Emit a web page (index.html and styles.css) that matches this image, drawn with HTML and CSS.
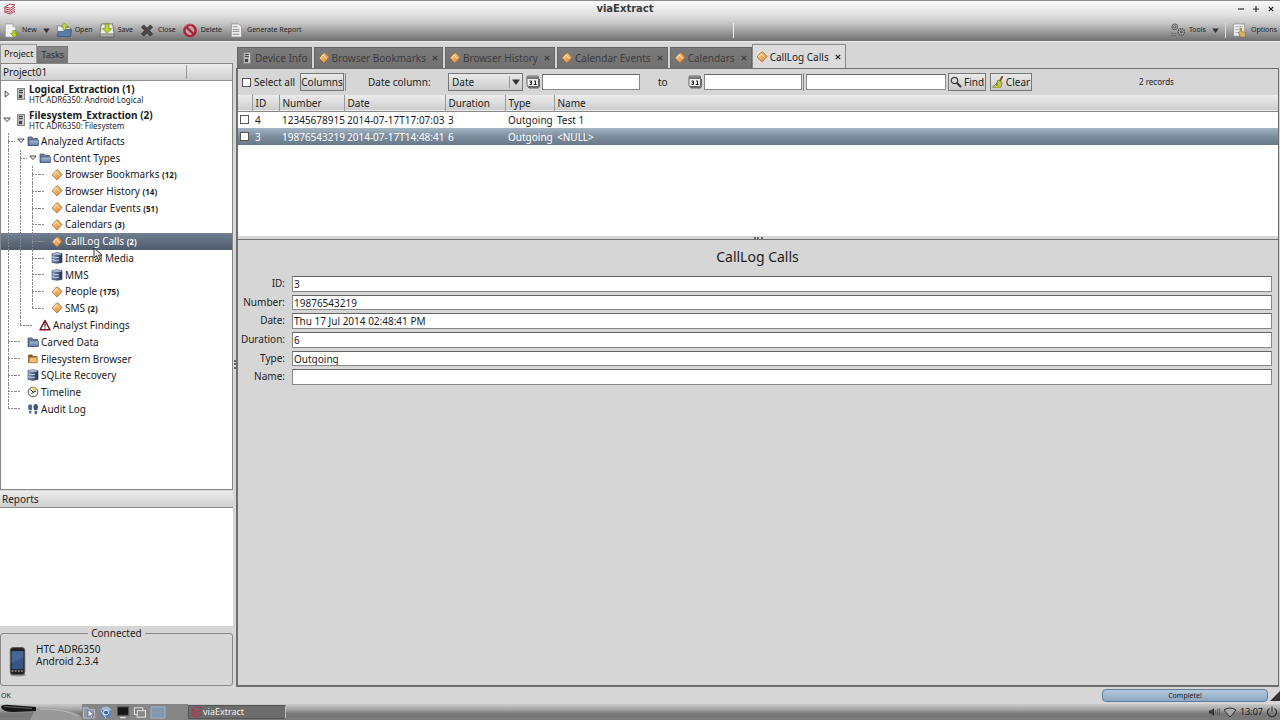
FILE: index.html
```
<!DOCTYPE html>
<html lang="en">
<head>
  <meta charset="UTF-8">
  <title>viaExtract</title>
  <link rel="stylesheet" href="styles.css">
</head>
<body>
  <!-- Shared icons -->
  <svg class="sprite" aria-hidden="true">
    <defs>
      <linearGradient id="gFolder" x1="0" y1="0" x2="0" y2="1"><stop offset="0" stop-color="#a9bdd8"/><stop offset="1" stop-color="#5f7fa9"/></linearGradient>
      <linearGradient id="gTag" x1="0" y1="0" x2="1" y2="1"><stop offset="0" stop-color="#ffd795"/><stop offset="1" stop-color="#dd7f2b"/></linearGradient>
      <linearGradient id="gDb" x1="0" y1="0" x2="1" y2="0"><stop offset="0" stop-color="#8aa0c0"/><stop offset="1" stop-color="#1f3152"/></linearGradient>
    </defs>
    <symbol id="tag" viewBox="0 0 12 12">
      <path d="M5.5 1 L7 1 L11 5.5 L6 11 L1 6 Z" fill="url(#gTag)" stroke="#a8703c" stroke-width=".8"/>
      <path d="M5 3 L2.6 5.8 M5 3 L8.8 6.6" stroke="#fff0cf" stroke-width=".9" fill="none"/>
    </symbol>
    <symbol id="folder" viewBox="0 0 12 12">
      <path d="M1 10.500V2h4l1 1.500h4.500v7z" fill="#6b7f9d" stroke="#46597a" stroke-width=".8"/>
      <path d="M2.200 5h9.300v5.500H1.500z" fill="url(#gFolder)" stroke="#46597a" stroke-width=".7"/>
    </symbol>
    <symbol id="folder-open" viewBox="0 0 12 12">
      <path d="M1.500 9.500V2h3.500l1 1.500h4v6z" fill="#8a5a2a" stroke="#7a4c22" stroke-width=".7"/>
      <path d="M2.500 4.300h7.500v5.500H2z" fill="#f2c173" stroke="#a5713a" stroke-width=".7"/>
    </symbol>
    <symbol id="db" viewBox="0 0 12 12">
      <path d="M1 1.500Q6 0 11 1.500V10.500Q6 12 1 10.500z" fill="url(#gDb)" stroke="#2a3a58" stroke-width=".6"/>
      <ellipse cx="6" cy="2" rx="4.600" ry="1" fill="#a7b6cd"/>
      <path d="M1.200 4.800Q4 6.200 8 5.400M1.200 7.600Q4 9 8 8.200" stroke="#dfe7f2" stroke-width=".8" fill="none"/>
    </symbol>
    <symbol id="warn" viewBox="0 0 12 12">
      <path d="M6 1.500L11 10.800H1z" fill="#fff" stroke="#7d1620" stroke-width="1.500" stroke-linejoin="round"/>
      <path d="M6 4.500v3.200M6 8.600v1" stroke="#222" stroke-width="1.200"/>
    </symbol>
    <symbol id="clock" viewBox="0 0 12 12">
      <circle cx="6" cy="6" r="4.800" fill="#f4f4f4" stroke="#555" stroke-width="1"/>
      <path d="M6 6L9.800 3A4.800 4.800 0 0 0 5 1.400z" fill="#e2d65c"/>
      <path d="M3.500 3.500L6.200 6.200L9 5M6.200 6.200L4.500 8" stroke="#222" stroke-width="1" fill="none"/>
    </symbol>
    <symbol id="feet" viewBox="0 0 12 12">
      <path d="M1 4C1 .300 5.300 .300 5.300 3.800Q5.300 5.500 4.700 7.200H1.800Q1 5.500 1 4zM1.900 8.100h2.700Q4.700 10.800 3.200 10.800T1.900 8.100z" fill="#526a8c"/>
      <path d="M6.500 3.500C6.500 0 11 .300 11 4Q10.900 5.600 10.200 7.300H7.300Q6.500 5.500 6.500 3.500zM7.400 8.200H10.200Q10.200 11.200 8.800 11.200T7.400 8.200z" fill="#3c5376"/>
    </symbol>
    <symbol id="device" viewBox="0 0 8 12">
      <rect x=".5" y=".5" width="7" height="11" fill="#b4b4b4" stroke="#888"/>
      <path d="M2 2.500h4M2 4.500h4" stroke="#444" stroke-width="1"/>
      <path d="M2 7h3v3H2z" fill="#444"/><path d="M6.300 1.500v9" stroke="#eee" stroke-width=".7"/>
    </symbol>
    <symbol id="cal" viewBox="0 0 14 14">
      <path d="M2 11.500L3 13h9.500L13.500 11V4" fill="#777" stroke="#666"/>
      <rect x="1" y="1" width="11.500" height="10.500" rx="1" fill="#f0f0f0" stroke="#666"/>
      <path d="M1 1.500h11.500v2.500H1z" fill="#777"/>
      <path d="M3.500 6h2v3.500h-2M3.800 7.700h1.700M8 6h1.500v3.500M7.700 9.500h3" stroke="#222" fill="none"/>
    </symbol>
    <symbol id="down" viewBox="0 0 8 6"><path d="M0 .5h8L4 6z" fill="#333"/></symbol>
    <symbol id="open" viewBox="0 0 8 8"><path d="M.800 2h6.400L4 5.600z" fill="#f4f4f4" stroke="#333" stroke-width=".9"/></symbol>
    <symbol id="shut" viewBox="0 0 8 8"><path d="M2.200 1v6L5.800 4z" fill="#f4f4f4" stroke="#333" stroke-width=".9"/></symbol>
    <symbol id="x" viewBox="0 0 6 6"><path d="M.8.8l4.400 4.400M5.200.8L.8 5.200" stroke="currentColor" stroke-width="1.200"/></symbol>
    <symbol id="layers" viewBox="0 0 12 12">
      <path d="M.8 4L6 1l5 1L6.500 5.200zM.8 4v1.700l5.500 1.500L11 4.200M.8 6.300v1.500l5.500 1.500L11 6.300M.8 8.400v1l5.500 1.500L11 8.200" fill="none" stroke="#b4324c" stroke-width=".9"/>
    </symbol>
  </svg>

  <header class="top">
    <div class="titlebar">
      <svg class="logo"><use href="#layers"/></svg>
      <h1>viaExtract</h1>
      <div class="window-buttons">
        <button aria-label="Minimize"><svg viewBox="0 0 6 6"><path d="M0 3h6" stroke="#333" stroke-width="1.200"/></svg></button>
        <button aria-label="Maximize"><svg viewBox="0 0 6 6"><path d="M0 3h6M3 0v6" stroke="#333" stroke-width="1.200"/></svg></button>
        <button aria-label="Close window"><svg><use href="#x"/></svg></button>
      </div>
    </div>
    <div class="toolbar">
      <div class="tools">
        <button>
          <svg viewBox="0 0 16 16"><path d="M2 1h8l3 3v11H2z" fill="#f3f3f3" stroke="#999" stroke-width=".7"/><path d="M10 1v3h3" fill="#ccc" stroke="#999" stroke-width=".6"/><path d="M10 8h3v3h2.500l-4 4.500L7.500 11H10z" fill="#b9d42d" stroke="#71851c" stroke-width=".7"/></svg>
          New <svg class="arrow"><use href="#down"/></svg>
        </button>
        <button>
          <svg viewBox="0 0 16 16"><path d="M1 14V3h5l1 2h8v9z" fill="#eef1f4" stroke="#66788c" stroke-width=".8"/><path d="M1 14.500L2 9h5l2-2h7l-1 7.500z" fill="#597da5" stroke="#38526f" stroke-width=".8"/><path d="M7 7V4H4.500L8.500 0l4 4H10v3z" fill="#bddb3b" stroke="#6f861c" stroke-width=".6"/></svg>
          Open
        </button>
        <button>
          <svg viewBox="0 0 16 16"><path d="M2 1h12l1.500 10v4H.5v-4z" fill="#ececec" stroke="#666" stroke-width=".9"/><path d="M.8 11.500h14.400v3H.8z" fill="#aaa" stroke="#666" stroke-width=".6"/><path d="M6 1h4v5h3l-5 5-5-5h3z" fill="#bbd62d" stroke="#71851c" stroke-width=".7"/></svg>
          Save
        </button>
        <button>
          <svg viewBox="0 0 16 16"><path d="M4.500 2L8 5.500 11.500 2 14 4.500 10.500 8l3.500 3.500-2.500 2.500L8 10.500 4.500 14 2 11.500 5.500 8 2 4.500z" fill="#494949" stroke="#333" stroke-width=".7"/></svg>
          Close
        </button>
        <button>
          <svg viewBox="0 0 16 16"><circle cx="8" cy="8" r="6" fill="#c5a5a9" stroke="#a92237" stroke-width="2.600"/><path d="M4 4l8 8" stroke="#a92237" stroke-width="2.600"/><path d="M2.500 5A6.500 6.500 0 0 1 10 1.500" stroke="#e57885" stroke-width=".8" fill="none"/></svg>
          Delete
        </button>
        <button>
          <svg viewBox="0 0 16 16"><path d="M3 1h8l3 3v11H3z" fill="#eee" stroke="#888" stroke-width=".8"/><path d="M4.500 4h5M4.500 7h7M4.500 9h7M4.500 12h7" stroke="#888"/></svg>
          Generate Report
        </button>
      </div>
      <div class="tools right">
        <button>
          <svg viewBox="0 0 16 16" fill="none" stroke="#555"><circle cx="4.500" cy="4" r="3"/><circle cx="4.500" cy="4" r="1.200"/><circle cx="11.500" cy="9.500" r="3.300" fill="#ccc" stroke-width="1.800" stroke-dasharray="1.600 .6"/><circle cx="11.500" cy="9.500" r="1.300" fill="#777"/><path d="M1 11h5M1 13.500h5" stroke-dasharray="1 1"/></svg>
          Tools <svg class="arrow"><use href="#down"/></svg>
        </button>
        <button>
          <svg viewBox="0 0 16 16"><path d="M1 1h12v13H1z" fill="#eee" stroke="#888" stroke-width=".8"/><path d="M3 4h8M3 7h4M3 10h3" stroke="#aaa"/><path d="M8 14l-2-4 2-.5V5.500h1.500V9L14 10v5H8z" fill="#d7ae62" stroke="#88683a" stroke-width=".7"/></svg>
          Options
        </button>
      </div>
    </div>
  </header>

  <main class="main">
    <aside class="side">
      <div class="side-tabs">
        <button class="side-tab current">Project</button>
        <button class="side-tab">Tasks</button>
      </div>
      <section class="project">
        <div class="bar"><span class="project-name">Project01</span></div>
        <ul class="roots">
          <li>
            <svg class="exp"><use href="#shut"/></svg><svg class="dev"><use href="#device"/></svg>
            <div><b>Logical_Extraction (1)</b><small>HTC ADR6350: Android Logical</small></div>
          </li>
          <li>
            <svg class="exp"><use href="#open"/></svg><svg class="dev"><use href="#device"/></svg>
            <div><b>Filesystem_Extraction (2)</b><small>HTC ADR6350: Filesystem</small></div>
          </li>
        </ul>
        <ul class="tree">
          <li><i class="t"></i><svg class="exp"><use href="#open"/></svg><svg><use href="#folder"/></svg><span>Analyzed Artifacts</span></li>
          <li><i class="v"></i><i class="t"></i><svg class="exp"><use href="#open"/></svg><svg><use href="#folder"/></svg><span>Content Types</span></li>
          <li><i class="v"></i><i class="v"></i><i class="t"></i><i class="s"></i><svg><use href="#tag"/></svg><span>Browser Bookmarks <b>(12)</b></span></li>
          <li><i class="v"></i><i class="v"></i><i class="t"></i><i class="s"></i><svg><use href="#tag"/></svg><span>Browser History <b>(14)</b></span></li>
          <li><i class="v"></i><i class="v"></i><i class="t"></i><i class="s"></i><svg><use href="#tag"/></svg><span>Calendar Events <b>(51)</b></span></li>
          <li><i class="v"></i><i class="v"></i><i class="t"></i><i class="s"></i><svg><use href="#tag"/></svg><span>Calendars <b>(3)</b></span></li>
          <li class="selected"><i class="v"></i><i class="v"></i><i class="t"></i><i class="s"></i><svg><use href="#tag"/></svg><span>CallLog Calls <b>(2)</b></span></li>
          <li><i class="v"></i><i class="v"></i><i class="t"></i><i class="s"></i><svg><use href="#db"/></svg><span>Internal Media</span></li>
          <li><i class="v"></i><i class="v"></i><i class="t"></i><i class="s"></i><svg><use href="#db"/></svg><span>MMS</span></li>
          <li><i class="v"></i><i class="v"></i><i class="t"></i><i class="s"></i><svg><use href="#tag"/></svg><span>People <b>(175)</b></span></li>
          <li><i class="v"></i><i class="v"></i><i class="l"></i><i class="s"></i><svg><use href="#tag"/></svg><span>SMS <b>(2)</b></span></li>
          <li><i class="v"></i><i class="l"></i><i class="s"></i><svg><use href="#warn"/></svg><span>Analyst Findings</span></li>
          <li><i class="t"></i><i class="s"></i><svg><use href="#folder"/></svg><span>Carved Data</span></li>
          <li><i class="t"></i><i class="s"></i><svg><use href="#folder-open"/></svg><span>Filesystem Browser</span></li>
          <li><i class="t"></i><i class="s"></i><svg><use href="#db"/></svg><span>SQLite Recovery</span></li>
          <li><i class="t"></i><i class="s"></i><svg><use href="#clock"/></svg><span>Timeline</span></li>
          <li><i class="l"></i><i class="s"></i><svg><use href="#feet"/></svg><span>Audit Log</span></li>
        </ul>
      </section>
      <section class="reports">
        <div class="bar">Reports</div>
      </section>
      <fieldset class="connected">
        <legend>Connected</legend>
        <svg class="phone" viewBox="0 0 20 34">
          <ellipse cx="10" cy="31.500" rx="9" ry="1.500" fill="#999"/>
          <rect x="1.500" y="1" width="16" height="30" rx="3" fill="#222" stroke="#555"/>
          <rect x="3" y="5" width="13" height="20" fill="#365487"/><path d="M3 5h13v7L3 18z" fill="#46669a"/>
          <path d="M3 27h13" stroke="#999" stroke-width="1.500" stroke-dasharray="2 1.500"/>
        </svg>
        <div class="phone-info">
          <span>HTC ADR6350</span>
          <span>Android 2.3.4</span>
        </div>
      </fieldset>
    </aside>

    <div class="divider"><span class="grip"></span></div>

    <section class="content">
      <nav class="tabs">
        <button class="tab"><svg class="dev"><use href="#device"/></svg>Device Info</button>
        <button class="tab"><svg><use href="#tag"/></svg>Browser Bookmarks<svg class="close"><use href="#x"/></svg></button>
        <button class="tab"><svg><use href="#tag"/></svg>Browser History<svg class="close"><use href="#x"/></svg></button>
        <button class="tab"><svg><use href="#tag"/></svg>Calendar Events<svg class="close"><use href="#x"/></svg></button>
        <button class="tab"><svg><use href="#tag"/></svg>Calendars<svg class="close"><use href="#x"/></svg></button>
        <button class="tab current"><svg><use href="#tag"/></svg>CallLog Calls<svg class="close"><use href="#x"/></svg></button>
      </nav>

      <div class="page">
        <div class="filters">
          <label class="select-all"><input type="checkbox">Select all</label>
          <button class="btn">Columns</button>
          <span class="sep"></span>
          <label class="date-label" for="dateColumn">Date column:</label>
          <div class="combo">
            <select id="dateColumn"><option>Date</option></select>
            <span class="combo-arrow"><svg><use href="#down"/></svg></span>
          </div>
          <button class="cal" aria-label="Pick start date"><svg><use href="#cal"/></svg></button>
          <input class="date" id="from" type="text" aria-label="From">
          <label class="to" for="until">to</label>
          <button class="cal" aria-label="Pick end date"><svg><use href="#cal"/></svg></button>
          <input class="date" id="until" type="text">
          <span class="sep"></span>
          <input class="search" type="text" aria-label="Search">
          <button class="btn find"><svg viewBox="0 0 12 12"><circle cx="4.500" cy="4.500" r="3.200" fill="#ddd" stroke="#444" stroke-width="1.300"/><path d="M7 7l4 4" stroke="#333" stroke-width="2"/></svg>Find</button>
          <button class="btn clear"><svg viewBox="0 0 12 12"><path d="M10.500 0L8 5" stroke="#7d4d28" stroke-width="1.800"/><path d="M6 4l4 2.500c0 3-1 5-2.500 5.500H1.500c-1-1-.500-2 1-2.500Q5 8 6 4z" fill="#c3cb45" stroke="#6d7022" stroke-width=".8"/><path d="M5 7v3" stroke="#555"/></svg>Clear</button>
          <span class="count">2 records</span>
        </div>

        <div class="records">
          <table>
            <colgroup><col class="c-check"><col class="c-id"><col class="c-number"><col class="c-date"><col class="c-duration"><col class="c-type"><col></colgroup>
            <thead>
              <tr><th></th><th>ID</th><th>Number</th><th>Date</th><th>Duration</th><th>Type</th><th>Name</th></tr>
            </thead>
            <tbody>
              <tr><td><input type="checkbox" aria-label="Record 4"></td><td>4</td><td>12345678915</td><td>2014-07-17T17:07:03</td><td>3</td><td>Outgoing</td><td>Test 1</td></tr>
              <tr class="selected"><td><input type="checkbox" aria-label="Record 3"></td><td>3</td><td>19876543219</td><td>2014-07-17T14:48:41</td><td>6</td><td>Outgoing</td><td>&lt;NULL&gt;</td></tr>
            </tbody>
          </table>
        </div>

        <div class="splitter"><span class="grip"></span></div>

        <div class="details">
          <h2>CallLog Calls</h2>
          <form class="form">
            <label for="fId">ID:</label><input id="fId" type="text" value="3">
            <label for="fNumber">Number:</label><input id="fNumber" type="text" value="19876543219">
            <label for="fDate">Date:</label><input id="fDate" type="text" value="Thu 17 Jul 2014 02:48:41 PM">
            <label for="fDuration">Duration:</label><input id="fDuration" type="text" value="6">
            <label for="fType">Type:</label><input id="fType" type="text" value="Outgoing">
            <label for="fName">Name:</label><input id="fName" type="text" value="">
          </form>
        </div>
      </div>
    </section>
  </main>

  <div class="status">
    <span>OK</span>
    <div class="progress">Complete!</div>
    <svg class="resize" viewBox="0 0 10 10"><path d="M10 0v10H0z" fill="#333"/></svg>
  </div>

  <footer class="taskbar">
    <svg class="pen" viewBox="0 0 82 16">
      <path d="M36 4Q62 2 80 11L82 16H30z" fill="#999"/><path d="M40 5Q62 4 78 12" stroke="#bbb" fill="none"/>
      <path d="M1 3Q2 0 10 1L36 3v4L14 8Q2 8 1 3z" fill="#151515"/><path d="M4 2.500l28 2" stroke="#777" stroke-width=".8"/>
    </svg>
    <div class="launchers">
      <svg viewBox="0 0 14 14"><path d="M1 2h5l1 2h6v9H1z" fill="#8b9ab0" stroke="#ccd" stroke-width=".8"/><path d="M6 4v8l2-2 1.500 3 1.500-1-1.500-2.500h3z" fill="#f4f4f4" stroke="#444" stroke-width=".6"/></svg>
      <svg viewBox="0 0 14 14"><circle cx="7" cy="7" r="6" fill="#5b82b7"/><path d="M1.500 4A6 6 0 0 1 12.800 5H7z" fill="#9fb8d8"/><path d="M1.500 5l4 6 1.500 2" stroke="#d5e1f0" fill="none"/><circle cx="7" cy="7" r="2.700" fill="#3868a8" stroke="#fff"/></svg>
      <svg viewBox="0 0 14 14"><rect x="1" y="1" width="12" height="9" fill="#161616" stroke="#555"/><path d="M4 12.500h6" stroke="#ddd" stroke-width="1.500"/></svg>
      <svg viewBox="0 0 14 14"><rect x="1" y="2" width="9" height="7" fill="#777" stroke="#eee"/><rect x="4" y="5" width="9" height="7" fill="#888" stroke="#eee"/></svg>
      <svg class="wide" viewBox="0 0 17 14"><rect x=".5" y="1" width="15" height="12" fill="#8097b0" stroke="#a8b6c6"/><path d="M8 2v10M1 7h14" stroke="#8a9fb6" stroke-width=".7"/></svg>
    </div>
    <button class="task"><svg><use href="#layers"/></svg>viaExtract</button>
    <div class="tray">
      <svg viewBox="0 0 12 12"><path d="M1 4.500h2L6 2v8L3 7.500H1z" fill="#333"/><path d="M7.500 4v4M9.200 3q1.500 3 0 6M11 2q1.500 4 0 8" stroke="#555" fill="none" stroke-width=".8"/></svg>
      <svg class="wifi" viewBox="0 0 14 12"><path d="M1 4q6-4 12 0L7 11z" fill="#aaa" stroke="#333"/></svg>
      <time>13:07</time>
      <svg viewBox="0 0 12 12"><path d="M3.500 2.500a4.500 4.500 0 1 0 5 0M6 .5v5" fill="none" stroke="#333" stroke-width="1.200"/></svg>
    </div>
  </footer>

  <svg class="cursor" viewBox="0 0 10 14"><path d="M1 1v10l2.500-2.300L5.300 13l2-1-1.800-3.800H9z" fill="#eee" stroke="#222" stroke-width=".9"/></svg>
</body>
</html>
```
FILE: styles.css
```
* {
  box-sizing: border-box;
}

body {
  margin: 0;
  height: 100vh;
  display: flex;
  flex-direction: column;
  overflow: hidden;
  background: #d6d6d6;
  color: #1c1c1c;
  font: 10px/14px "Noto Sans", "Open Sans", sans-serif;
}

button, input, select {
  font: inherit;
  color: inherit;
  margin: 0;
}

button {
  display: flex;
  align-items: center;
  padding: 0;
  border: none;
  background: none;
  white-space: nowrap;
}

svg {
  flex: none;
  width: 12px;
  height: 12px;
}

ul {
  list-style: none;
  margin: 0;
  padding: 0;
}

.sprite {
  position: absolute;
  width: 0;
  height: 0;
}

/* Title bar and main toolbar share one gradient */
.top {
  height: 42px;
  flex: none;
  border-top: 1px solid #8c8c8c;
  border-bottom: 1px solid #ececec;
  background: linear-gradient(#fafafa, #e0e0e0 35%, #c2c2c2 58%, #8b8b8b 85%, #707070);
}

.titlebar {
  display: grid;
  grid-template-columns: 1fr auto 1fr;
  align-items: center;
  height: 16px;
  padding: 0 6px 0 4px;
}

.titlebar h1 {
  margin: 0 0 0 -28px;
  font: bold 10px/14px "DejaVu Sans", sans-serif;
  color: #3c3c3c;
}

.window-buttons {
  display: flex;
  justify-content: flex-end;
  gap: 9px;
}

.window-buttons svg {
  width: 6px;
  height: 6px;
}

.toolbar, .tools {
  display: flex;
  align-items: center;
}

.toolbar {
  height: 24px;
  padding: 2px 3px 0;
  font-size: 7px;
}

.tools {
  flex: 1;
  gap: 6px;
}

.tools button {
  gap: 3px;
  color: #222;
}

.tools svg {
  width: 16px;
  height: 15px;
}

.tools .arrow {
  width: 7px;
  height: 5px;
  margin: 0 0 0 3px;
}

.tools.right {
  justify-content: flex-end;
  flex: 0 0 544px;
  border-left: 1px solid #eee;
}

.tools.right button + button {
  border-left: 1px solid #ddd;
  padding-left: 6px;
}

/* Left panel */
.main {
  flex: 1;
  min-height: 0;
  display: flex;
}

.side {
  width: 233px;
  flex: none;
  display: flex;
  flex-direction: column;
}

.side-tabs {
  display: flex;
  align-items: flex-end;
  height: 21px;
  flex: none;
}

.side-tab {
  height: 17px;
  padding: 0 3px;
  border: 1px solid #777;
  border-bottom: none;
  background: linear-gradient(#898989, #747474);
  color: #333;
  font-size: 9px;
}

.side-tab.current {
  height: 19px;
  border-color: #999;
  background: #dcdcdc;
  color: #222;
}

.project {
  flex: 1;
  border: 1px solid #888;
  background: #fff;
}

.bar {
  display: flex;
  height: 17px;
  padding: 1px 2px;
  border-bottom: 1px solid #8f8f8f;
  background: linear-gradient(#ececec, #cfcfcf);
}

.project-name {
  width: 184px;
  border-right: 1px solid #999;
}

.roots li {
  display: flex;
  align-items: center;
  height: 26px;
  padding: 0 2px;
}

.roots div {
  padding-left: 4px;
}

.roots b, .roots small {
  display: block;
}

.roots b {
  line-height: 12px;
}

.roots small {
  font-size: 8px;
  line-height: 10px;
}

.exp {
  width: 8px;
  height: 8px;
  margin: 0 2px;
}

.roots .exp {
  margin: 0 6px 0 0;
}

.dev {
  width: 8px;
}

/* Tree rows share the height evenly */
.tree {
  display: grid;
  grid-auto-rows: 1fr;
  height: 284px;
}

.tree li {
  display: flex;
  align-items: center;
  padding-left: 2px;
}

.tree span {
  padding-left: 2px;
  white-space: nowrap;
}

.tree b {
  font-size: 8px;
}

.tree i {
  flex: none;
  align-self: stretch;
  width: 12px;
  background-repeat: no-repeat;
}

.tree .v, .tree .t, .tree .l {
  background-image: repeating-linear-gradient(#888 0 2px, transparent 2px 3px), repeating-linear-gradient(90deg, #888 0 2px, transparent 2px 3px);
  background-position: 5px 0, 5px 50%;
  background-size: 1px 100%, 0 0;
}

.tree .t {
  background-size: 1px 100%, 7px 1px;
}

.tree .l {
  background-size: 1px 50%, 7px 1px;
}

.tree .s {
  background-image: repeating-linear-gradient(90deg, #888 0 2px, transparent 2px 3px);
  background-position: 0 50%;
  background-size: 6px 1px;
}

.tree .selected {
  background: linear-gradient(#718092, #4d5b6b);
  color: #fff;
}

.reports {
  height: 135px;
  flex: none;
  margin-top: 1px;
  background: #fff;
}

.connected {
  display: flex;
  flex: none;
  height: 60px;
  margin: 0 0 1px;
  padding: 3px 8px;
  border: 1px solid #888;
  border-radius: 3px;
}

.connected legend {
  margin: 0 auto;
  padding: 0 3px;
}

.phone-info {
  display: flex;
  flex-direction: column;
  margin-left: 9px;
  line-height: 12px;
}

.phone {
  width: 18px;
  height: 34px;
  margin-top: 2px;
}

.divider {
  width: 3px;
  flex: none;
  display: flex;
  align-items: center;
  justify-content: center;
}

.grip {
  width: 9px;
  border-top: 2px dotted #666;
}

.divider .grip {
  width: 0;
  height: 9px;
  border-top: none;
  border-left: 2px dotted #666;
}

/* Notebook tabs */
.content {
  flex: 1;
  min-width: 0;
  display: flex;
  flex-direction: column;
}

.tabs {
  display: flex;
  align-items: flex-end;
  gap: 2px;
  height: 26px;
  flex: none;
  padding-left: 1px;
}

.tab {
  height: 21px;
  gap: 2px;
  padding: 0 3px;
  border: 1px solid #666;
  border-bottom: none;
  background: linear-gradient(#7b7b7b, #707070);
  color: #3c3c3c;
}

.tab .dev {
  margin: 0 2px;
}

.tab.current {
  height: 24px;
  margin-left: -2px;
  border-color: #888;
  background: #dcdcdc;
  color: #222;
}

.tab .close {
  width: 6px;
  height: 6px;
  margin: 0 1px 0 4px;
}

.page {
  flex: 1;
  min-height: 0;
  display: flex;
  flex-direction: column;
  margin-right: 1px;
  border: 1px solid #6e6e6e;
  border-left-width: 2px;
  border-bottom-width: 2px;
}

.filters {
  display: flex;
  align-items: center;
  height: 26px;
  flex: none;
  padding-left: 4px;
}

input[type="checkbox"] {
  appearance: none;
  display: block;
  width: 9px;
  height: 9px;
  border: 1px solid #555;
  background: #fff;
}

input[type="text"] {
  min-width: 0;
  border: 1px solid #888;
  border-top-color: #666;
  background: #fff;
  outline: none;
}

.select-all {
  display: flex;
  align-items: center;
  gap: 3px;
  width: 58px;
  white-space: nowrap;
}

.btn {
  justify-content: center;
  width: 44px;
  height: 18px;
  gap: 2px;
  border: 1px solid #777;
  background: linear-gradient(#e9e9e9, #cbcbcb);
}

.btn.find {
  width: 38px;
  margin: 0 4px 0 2px;
}

.btn.clear {
  width: 42px;
}

.sep {
  width: 1px;
  height: 18px;
  margin: 0 2px 0 1px;
  background: #888;
}

.date-label {
  width: 100px;
  padding-left: 20px;
  white-space: nowrap;
}

.combo {
  position: relative;
  width: 75px;
  height: 18px;
}

.combo select {
  appearance: none;
  width: 100%;
  height: 100%;
  padding: 0 3px;
  border: 1px solid #777;
  border-radius: 0;
  background: linear-gradient(#e9e9e9, #cbcbcb);
}

.combo-arrow {
  position: absolute;
  right: 3px;
  top: 3px;
  display: flex;
  align-items: center;
  height: 12px;
  padding-left: 2px;
  border-left: 1px solid #999;
  pointer-events: none;
}

.combo-arrow svg {
  width: 8px;
  height: 6px;
}

.cal {
  margin: 0 2px 0 3px;
}

.cal svg {
  width: 14px;
  height: 14px;
}

.date {
  width: 98px;
  height: 16px;
}

.to {
  width: 45px;
  padding-left: 18px;
}

.search {
  width: 140px;
  height: 16px;
}

.count {
  margin-left: 107px;
  font-size: 8px;
}

/* Records */
.records {
  height: 141px;
  flex: none;
  background: #fff;
}

table {
  width: 100%;
  border-collapse: collapse;
  table-layout: fixed;
}

.c-check {
  width: 14px;
}

.c-id {
  width: 27px;
}

.c-number {
  width: 65px;
}

.c-date {
  width: 101px;
}

.c-duration {
  width: 60px;
}

.c-type {
  width: 49px;
}

th, td {
  height: 17px;
  padding: 0 0 0 3px;
  line-height: 14px;
  text-align: left;
  font-weight: normal;
  white-space: nowrap;
}

th {
  height: 16px;
}

td:nth-child(1) {
  padding-left: 2px;
}

thead tr {
  background: linear-gradient(#ececec, #cdcdcd);
  border-bottom: 1px solid #888;
}

th + th {
  border-left: 1px solid #999;
}

tbody .selected {
  background: linear-gradient(#a3b4c5, #7c8d9d 50%, #68798a);
  color: #fff;
}

.splitter {
  display: flex;
  justify-content: center;
  align-items: center;
  height: 4px;
  flex: none;
  border-bottom: 1px solid #6e6e6e;
}

.details {
  flex: 1;
  padding: 8px 6px 0 5px;
}

.details h2 {
  margin: 0 0 10px;
  font-size: 14px;
  line-height: 18px;
  font-weight: normal;
  text-align: center;
}

.form {
  display: grid;
  grid-template-columns: 42px 1fr;
  grid-auto-rows: minmax(0, 1fr);
  gap: 3px 7px;
  height: 109px;
}

.form label {
  justify-self: end;
  line-height: 15px;
}

.form input {
  height: 100%;
  padding: 0 1px;
}

/* Status bar and desktop panel */
.status {
  display: flex;
  align-items: center;
  height: 17px;
  flex: none;
  padding-left: 1px;
  font-size: 7px;
}

.progress {
  width: 166px;
  height: 13px;
  margin-left: auto;
  border: 1px solid #5f7d9c;
  border-radius: 4px;
  background: linear-gradient(#b5c8da, #8da7c2);
  line-height: 11px;
  text-align: center;
}

.resize {
  width: 10px;
  height: 10px;
  margin-left: 2px;
}

.taskbar {
  display: flex;
  align-items: center;
  height: 16px;
  flex: none;
  background: linear-gradient(#c9c9c9, #a5a5a5 35%, #777 60%, #7b7b7b);
}

.pen {
  width: 82px;
  height: 16px;
}

.launchers {
  display: flex;
  gap: 3px;
  width: 106px;
  height: 16px;
  align-items: center;
  background: #858585;
}

.launchers svg {
  width: 14px;
  height: 13px;
}

.launchers .wide {
  width: 17px;
}

.task {
  width: 98px;
  height: 14px;
  padding-left: 2px;
  border: 1px solid #999;
  border-color: #555 #bbb #555 #555;
  background: #6c6c6c;
  color: #f2f2f2;
  font-size: 9px;
}

.tray {
  display: flex;
  align-items: center;
  gap: 3px;
  margin-left: auto;
  padding-right: 2px;
  font-size: 9px;
}

.tray .wifi {
  width: 14px;
}

.cursor {
  position: absolute;
  left: 93px;
  top: 247px;
  width: 10px;
  height: 14px;
}
```
